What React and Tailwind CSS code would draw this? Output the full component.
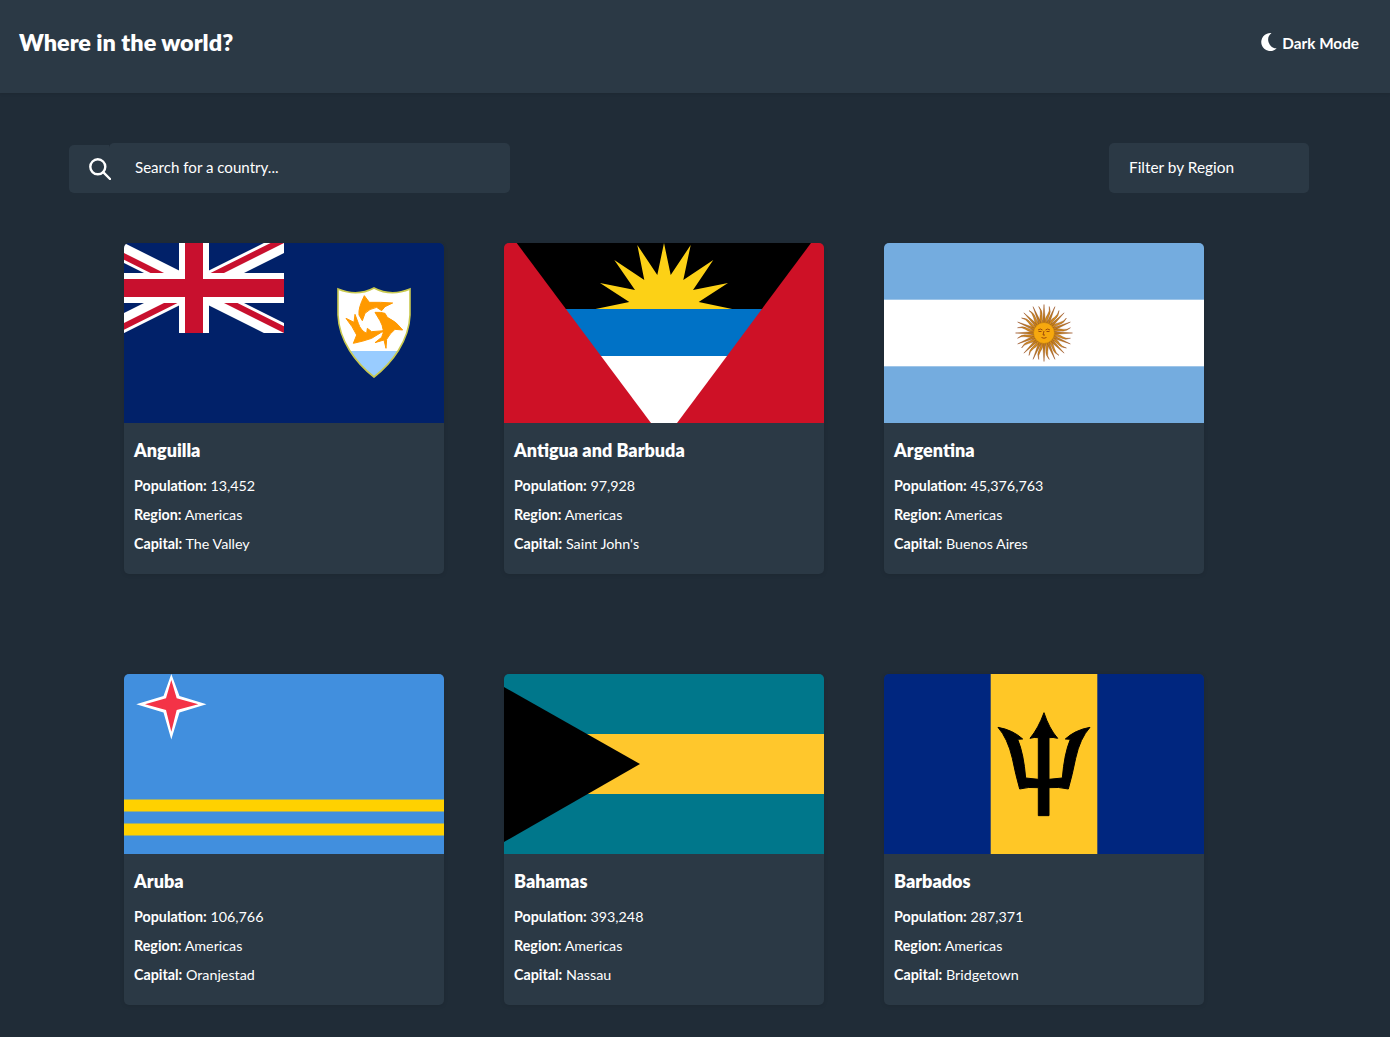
function UnionJack() {
  return (
    <svg x="-20" y="0" width="180" height="90" viewBox="0 0 60 30">
      <clipPath id="uj">
        <path d="M30,15 h30 v15 z v15 h-30 z h-30 v-15 z v-15 h30 z" />
      </clipPath>
      <path d="M0,0 L60,30 M60,0 L0,30" stroke="#fff" strokeWidth="6" />
      <path d="M0,0 L60,30 M60,0 L0,30" clipPath="url(#uj)" stroke="#c8102e" strokeWidth="4" />
      <path d="M30,0 v30 M0,15 h60" stroke="#fff" strokeWidth="10" />
      <path d="M30,0 v30 M0,15 h60" stroke="#c8102e" strokeWidth="6" />
    </svg>
  );
}

function Anguilla() {
  const shield =
    "M214,46 Q233,54 250,45 Q267,54 286,46 L286,72 C285,98 268,120 250,134 C232,120 215,98 214,72 Z";
  return (
    <svg viewBox="0 0 320 180" className="block w-full h-full">
      <rect width="320" height="180" fill="#012169" />
      <UnionJack />
      <clipPath id="shield">
        <path d={shield} />
      </clipPath>
      <path d={shield} fill="#fff" />
      <rect x="210" y="108" width="80" height="30" fill="#99ccff" clipPath="url(#shield)" />
      <path d={shield} fill="none" stroke="#c9c94f" strokeWidth="1.6" />
      <g transform="translate(206 37) scale(0.3333)" fill="#ff9900" stroke="#ff9900" strokeWidth="3" strokeLinejoin="round">
        <path d="M103,47 L118,67 Q150,66 188,69 L165,80 L155,92 L140,82 Q118,86 105,100 L97,122 L87,105 Q84,85 103,47 Z" />
        <path d="M135,97 Q152,96 165,100 L172,112 Q200,125 218,150 L195,148 Q180,160 170,178 L168,205 L162,180 L135,188 L155,172 Q166,150 150,122 Z" />
        <path d="M48,115 L72,127 L75,103 L85,130 Q92,152 110,160 L112,145 L125,155 L162,152 L125,175 Q100,184 70,190 L80,165 Q68,140 48,115 Z" />
      </g>
    </svg>
  );
}

function Antigua() {
  return (
    <svg viewBox="0 0 320 180" className="block w-full h-full">
      <rect width="320" height="180" fill="#ce1126" />
      <polygon points="12.7,0 307,0 257.9,66 61.9,66" fill="#000" />
      <polygon points="90.3,66.3 125.3,59 96,40 131,47 110.3,17 140.3,37 133.3,2 153.3,32 160,0 166.7,32 186.7,2 179.3,37 209.3,17 189,47 224,40 194.7,59 229.3,66.3" fill="#fcd116" />
      <polygon points="61.9,66 257.9,66 223,113 97,113" fill="#0072c6" />
      <polygon points="97,113 223,113 173,180 147,180" fill="#fff" />
    </svg>
  );
}

const rays = Array.from({ length: 32 }, (_, i) => i * 11.25);

function Argentina() {
  return (
    <svg viewBox="0 0 320 180" className="block w-full h-full">
      <rect width="320" height="180" fill="#74acdf" />
      <rect y="56.7" width="320" height="66.6" fill="#fff" />
      <g transform="translate(160 90)">
        {rays.map((deg, i) => (
          <g key={deg} transform={`rotate(${deg})`}>
            {i % 2 === 0 ? (
              <path d="M-1.5,-9 L0,-28.5 L1.5,-9 Z" fill="#c07f1e" stroke="#85340a" strokeWidth="0.35" />
            ) : (
              <path d="M-1.1,-9 Q-2,-15 0,-19 Q1.6,-23 0,-27 Q3,-22 1.6,-18 Q0.5,-14 1.1,-9 Z" fill="#d08e22" stroke="#85340a" strokeWidth="0.35" />
            )}
          </g>
        ))}
        <circle r="10.5" fill="#f6a80e" stroke="#b77a14" strokeWidth="0.6" />
        <g fill="none" stroke="#85340a" strokeWidth="0.8">
          <path d="M-6,-3 Q-3.5,-5 -1.5,-3" />
          <path d="M1.5,-3 Q3.5,-5 6,-3" />
          <path d="M-5.5,-1.5 h3" />
          <path d="M2.5,-1.5 h3" />
          <path d="M0,-2 L-1,2 h2" />
          <path d="M-2.5,4.5 Q0,6 2.5,4.5" />
        </g>
      </g>
    </svg>
  );
}

function Aruba() {
  return (
    <svg viewBox="0 0 320 180" className="block w-full h-full">
      <rect width="320" height="180" fill="#418fde" />
      <rect y="125.5" width="320" height="12" fill="#ffd100" />
      <rect y="149.5" width="320" height="12" fill="#ffd100" />
      <polygon points="47.3,0 55.5,22 82.5,30.3 55.5,38.5 47.3,65.5 39.5,38.5 12.2,30.3 39.5,22" fill="#fff" />
      <polygon points="47.3,6 52.7,24.3 74.3,30.3 52.7,36 47.3,57.7 42,36 21,30.3 42,24.3" fill="#f43347" />
    </svg>
  );
}

function Bahamas() {
  return (
    <svg viewBox="0 0 320 180" className="block w-full h-full">
      <rect width="320" height="180" fill="#00778b" />
      <rect y="60" width="320" height="60" fill="#ffc72c" />
      <polygon points="0,13 136,90 0,168" fill="#000" />
    </svg>
  );
}

function Barbados() {
  return (
    <svg viewBox="0 0 320 180" className="block w-full h-full">
      <rect width="320" height="180" fill="#00267f" />
      <rect x="106.7" width="106.6" height="180" fill="#ffc726" />
      <g transform="translate(101 26) scale(0.3333)">
        <path
          d="M177,38 Q192,85 218,115 Q204,111 192,113 L192,238 L232,234 Q238,160 256,118 L241,117 Q270,90 315,82 Q285,115 272,175 Q262,225 250,267 Q220,260 192,263 L192,347 L160,347 L160,263 Q130,260 104,267 Q92,225 82,175 Q68,115 39,82 Q84,90 113,117 L98,118 Q116,160 122,234 L160,238 L160,113 Q148,111 135,115 Q160,85 177,38 Z"
          fill="#000"
          stroke="#000"
          strokeWidth="3"
        />
      </g>
    </svg>
  );
}

const countries = [
  { name: "Anguilla", population: "13,452", capital: "The Valley", flag: Anguilla },
  { name: "Antigua and Barbuda", population: "97,928", capital: "Saint John's", flag: Antigua },
  { name: "Argentina", population: "45,376,763", capital: "Buenos Aires", flag: Argentina },
  { name: "Aruba", population: "106,766", capital: "Oranjestad", flag: Aruba },
  { name: "Bahamas", population: "393,248", capital: "Nassau", flag: Bahamas },
  { name: "Barbados", population: "287,371", capital: "Bridgetown", flag: Barbados },
];

function Card({ country }) {
  const Flag = country.flag;
  return (
    <div className="h-[331px] overflow-hidden rounded-[5px] bg-[#2b3945] shadow-[0_1px_4px_rgba(0,0,0,0.1)]">
      <div className="h-[180px]">
        <Flag />
      </div>
      <div className="px-[10px] pt-[15px]">
        <h2 className="mb-[13px] text-[18px] leading-[25px] font-extrabold">{country.name}</h2>
        <p className="mb-[9px] text-[14.3px] leading-[20px]">
          <span className="font-bold">Population:</span> {country.population}
        </p>
        <p className="mb-[9px] text-[14.3px] leading-[20px]">
          <span className="font-bold">Region:</span> Americas
        </p>
        <p className="text-[14.3px] leading-[20px]">
          <span className="font-bold">Capital:</span> {country.capital}
        </p>
      </div>
    </div>
  );
}

export default function App() {
  return (
    <div className="h-[1037px] overflow-hidden bg-[#202c37] font-['Lato','Noto_Sans',sans-serif] text-white">
      <header className="flex h-[93px] items-center justify-between bg-[#2b3945] pr-[31px] pb-[9px] pl-[19px] shadow-[0_1px_3px_rgba(0,0,0,0.1)]">
        <h1 className="text-[23.4px] leading-[32px] font-extrabold">Where in the world?</h1>
        <div className="flex items-center gap-[5px]">
          <svg width="16" height="18" viewBox="0 0 16 18" fill="#fff">
            <path d="M10.5,0.1 A9,9 0 1 0 15.7,15.3 A8.5,8.5 0 0 1 10.5,0.1 Z" />
          </svg>
          <span className="pt-[2px] text-[15.3px] font-bold">Dark Mode</span>
        </div>
      </header>

      <div className="mt-[50px] flex items-start justify-between pr-[81px] pl-[69px]">
        <div className="flex h-[50px] items-end">
          <div className="flex h-[48px] w-[40px] items-center rounded-l-[5px] bg-[#2b3945] pl-[20px]">
            <svg width="22" height="22" viewBox="0 0 22 22" fill="none" stroke="#fff" strokeWidth="2.4" className="relative z-10 shrink-0">
              <circle cx="8.8" cy="8.8" r="7.5" />
              <path d="M14.2,14.2 L21,21" strokeLinecap="round" />
            </svg>
          </div>
          <input
            placeholder="Search for a country..."
            className="h-[50px] w-[401px] rounded-r-[5px] rounded-tl-[5px] bg-[#2b3945] pb-[2px] pl-[26px] text-[15.1px] text-white outline-none placeholder:text-white"
          />
        </div>
        <div className="flex h-[50px] w-[200px] items-center rounded-[5px] bg-[#2b3945] pl-[20px] text-[15.4px]">
          Filter by Region
        </div>
      </div>

      <main className="mt-[50px] ml-[124px] grid grid-cols-[repeat(3,320px)] gap-x-[60px] gap-y-[100px]">
        {countries.map((c) => (
          <Card key={c.name} country={c} />
        ))}
      </main>
    </div>
  );
}
